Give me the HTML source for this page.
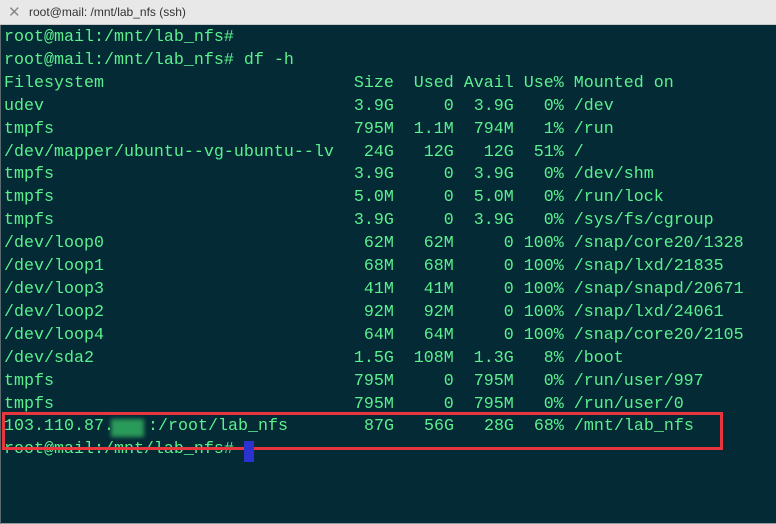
<!DOCTYPE html>
<html><head><meta charset="utf-8"><style>
html,body{margin:0;padding:0;width:776px;height:524px;overflow:hidden;background:#042a35;}
.win{position:absolute;left:0;top:0;width:775px;height:523px;border-right:1px solid #8a9a9e;border-bottom:1px solid #8a9a9e;border-left:1px solid #5a6a6e;background:#042a35;}
.title{position:absolute;left:0;top:0;width:776px;height:24px;background:#e8e8e8;border-bottom:1px solid #c8c8c8;font-family:"Liberation Sans",sans-serif;font-size:12px;color:#333;}
.title .x{position:absolute;left:8px;top:3px;font-size:15px;color:#888;}
.title .t{position:absolute;left:29px;top:5px;}
pre,.ln{position:absolute;margin:0;font-family:"Liberation Mono",monospace;font-size:16.67px;line-height:22.9px;color:#5cf08e;white-space:pre;}
pre{left:4px;top:27px;}
.box{position:absolute;left:2px;top:412px;width:715px;height:32px;border:3px solid #e8363f;}
.blur{position:absolute;left:111px;top:419px;width:33px;height:18px;background:#2a9a5a;filter:blur(2px);}
.cur{position:absolute;left:244px;top:441px;width:10px;height:21px;background:#2a32d0;}
</style></head><body>
<div class="win"></div>
<div class="title"><span class="x">✕</span><span class="t">root@mail: /mnt/lab_nfs (ssh)</span></div>
<pre>root@mail:/mnt/lab_nfs#
root@mail:/mnt/lab_nfs# df -h
Filesystem                         Size  Used Avail Use% Mounted on
udev                               3.9G     0  3.9G   0% /dev
tmpfs                              795M  1.1M  794M   1% /run
/dev/mapper/ubuntu--vg-ubuntu--lv   24G   12G   12G  51% /
tmpfs                              3.9G     0  3.9G   0% /dev/shm
tmpfs                              5.0M     0  5.0M   0% /run/lock
tmpfs                              3.9G     0  3.9G   0% /sys/fs/cgroup
/dev/loop0                          62M   62M     0 100% /snap/core20/1328
/dev/loop1                          68M   68M     0 100% /snap/lxd/21835
/dev/loop3                          41M   41M     0 100% /snap/snapd/20671
/dev/loop2                          92M   92M     0 100% /snap/lxd/24061
/dev/loop4                          64M   64M     0 100% /snap/core20/2105
/dev/sda2                          1.5G  108M  1.3G   8% /boot
tmpfs                              795M     0  795M   0% /run/user/997
tmpfs                              795M     0  795M   0% /run/user/0
103.110.87.
root@mail:/mnt/lab_nfs# </pre>
<span class="ln" style="left:148px;top:416px">:/root/lab_nfs</span>
<span class="ln" style="left:364px;top:416px">87G   56G   28G  68% /mnt/lab_nfs</span>
<div class="blur"></div>
<div class="box"></div>
<div class="cur"></div>
</body></html>
